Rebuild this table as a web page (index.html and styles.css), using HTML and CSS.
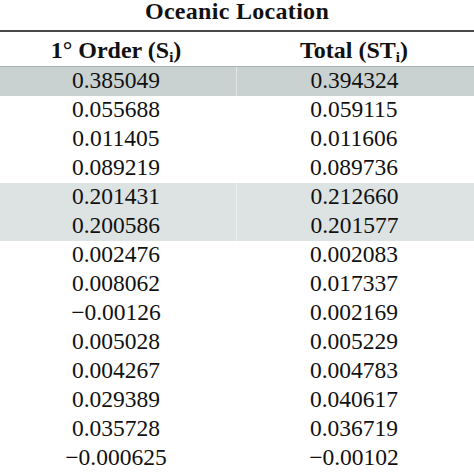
FILE: index.html
```html
<!DOCTYPE html>
<html>
<head>
<meta charset="utf-8">
<link rel="stylesheet" href="styles.css">
</head>
<body>
<div class="table">
  <div class="title">Oceanic Location</div>
  <div class="row head">
    <div class="cell">1° Order (S<sub>i</sub>)</div>
    <div class="cell">Total (ST<sub>i</sub>)</div>
  </div>
  <div class="row band1 first">
    <div class="cell">0.385049</div>
    <div class="cell divided">0.394324</div>
  </div>
  <div class="row"><div class="cell">0.055688</div><div class="cell">0.059115</div></div>
  <div class="row"><div class="cell">0.011405</div><div class="cell">0.011606</div></div>
  <div class="row"><div class="cell">0.089219</div><div class="cell">0.089736</div></div>
  <div class="row band2"><div class="cell">0.201431</div><div class="cell divided">0.212660</div></div>
  <div class="row band2"><div class="cell">0.200586</div><div class="cell divided">0.201577</div></div>
  <div class="row"><div class="cell">0.002476</div><div class="cell">0.002083</div></div>
  <div class="row"><div class="cell">0.008062</div><div class="cell">0.017337</div></div>
  <div class="row"><div class="cell">−0.00126</div><div class="cell">0.002169</div></div>
  <div class="row"><div class="cell">0.005028</div><div class="cell">0.005229</div></div>
  <div class="row"><div class="cell">0.004267</div><div class="cell">0.004783</div></div>
  <div class="row"><div class="cell">0.029389</div><div class="cell">0.040617</div></div>
  <div class="row"><div class="cell">0.035728</div><div class="cell">0.036719</div></div>
  <div class="row"><div class="cell">−0.000625</div><div class="cell">−0.00102</div></div>
</div>
</body>
</html>
```

FILE: styles.css
```css
html, body {
  margin: 0;
  padding: 0;
  background: #ffffff;
}
.table {
  width: 474px;
  font-family: "Liberation Serif", "Times New Roman", serif;
  color: #111111;
}
.title {
  height: 32px;
  line-height: 22px;
  text-align: center;
  font-weight: bold;
  font-size: 24px;
  letter-spacing: 0.3px;
  border-bottom: 2px solid #4a4a4a;
  box-sizing: border-box;
}
.row {
  display: grid;
  grid-template-columns: 236px 238px;
  height: 29px;
  line-height: 27px;
  font-size: 23.5px;
}
.row .cell {
  text-align: center;
}
.row .cell:first-child {
  padding-right: 4px;
}
.row .cell:last-child {
  padding-right: 2px;
}
.head {
  height: 35px;
  padding-top: 3px;
  line-height: 31px;
  font-weight: bold;
  font-size: 24px;
  box-sizing: border-box;
  border-bottom: 1px solid #a9b2b2;
}
.head sub {
  font-size: 0.62em;
  vertical-align: -0.3em;
  line-height: 0;
}
.band1 {
  background: #c9d2d1;
}
.band2 {
  background: #dde2e2;
}
.divided {
  border-left: 1px solid rgba(255, 255, 255, 0.45);
}
```
